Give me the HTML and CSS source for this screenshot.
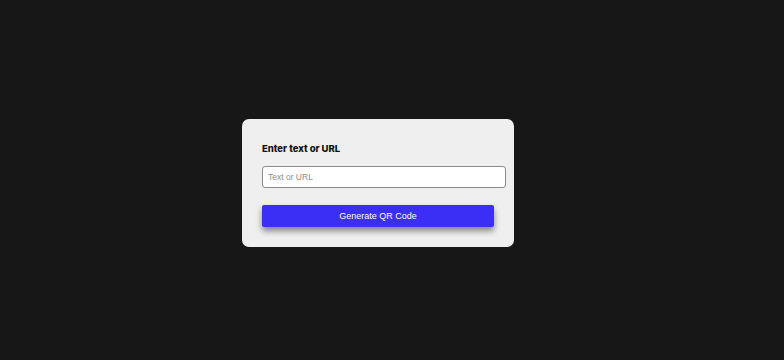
FILE: index.html
```html
<!DOCTYPE html>
<html lang="en">
<head>
<meta charset="utf-8">
<title>QR Code Generator</title>
<link rel="stylesheet" href="styles.css">
</head>
<body>
<main class="page">
  <section class="card">
    <label class="label" for="qr-text">Enter text or URL</label>
    <input class="field" id="qr-text" type="text" placeholder="Text or URL">
    <button class="btn" type="button">Generate QR Code</button>
  </section>
</main>
</body>
</html>
```
FILE: styles.css
```css
* { box-sizing: content-box; }
html, body {
  margin: 0;
  padding: 0;
  background: #171717;
}
.page {
  height: 360px;
  display: flex;
  align-items: center;
  justify-content: center;
  padding: 6px 28px 0 0;
  box-sizing: border-box;
}
.card {
  width: 232px;
  padding: 22px 20px 20px;
  background: #efefef;
  border-radius: 7px;
  display: flex;
  flex-direction: column;
}
.label {
  font-family: "Inter", "Noto Sans", sans-serif;
  font-weight: 800;
  font-size: 9.5px;
  line-height: 15px;
  color: #111;
  letter-spacing: 0;
}
.field {
  margin-top: 10px;
  width: 100%;
  height: 20px;
  padding: 0 5px;
  border: 1px solid #8a8a8a;
  border-radius: 3px;
  background: #fff;
  font-family: "Liberation Sans", Arial, sans-serif;
  font-size: 8.5px;
  color: #333;
  outline: none;
}
.field::placeholder { color: #8d8d8d; }
.btn {
  margin-top: 17px;
  width: 232px;
  height: 22px;
  border: none;
  border-radius: 2px;
  background: #3b2ff5;
  color: #fff;
  font-family: "Liberation Sans", Arial, sans-serif;
  font-size: 9px;
  padding: 0;
  box-shadow: 0 4px 6px rgba(0, 0, 0, 0.45);
}
```
